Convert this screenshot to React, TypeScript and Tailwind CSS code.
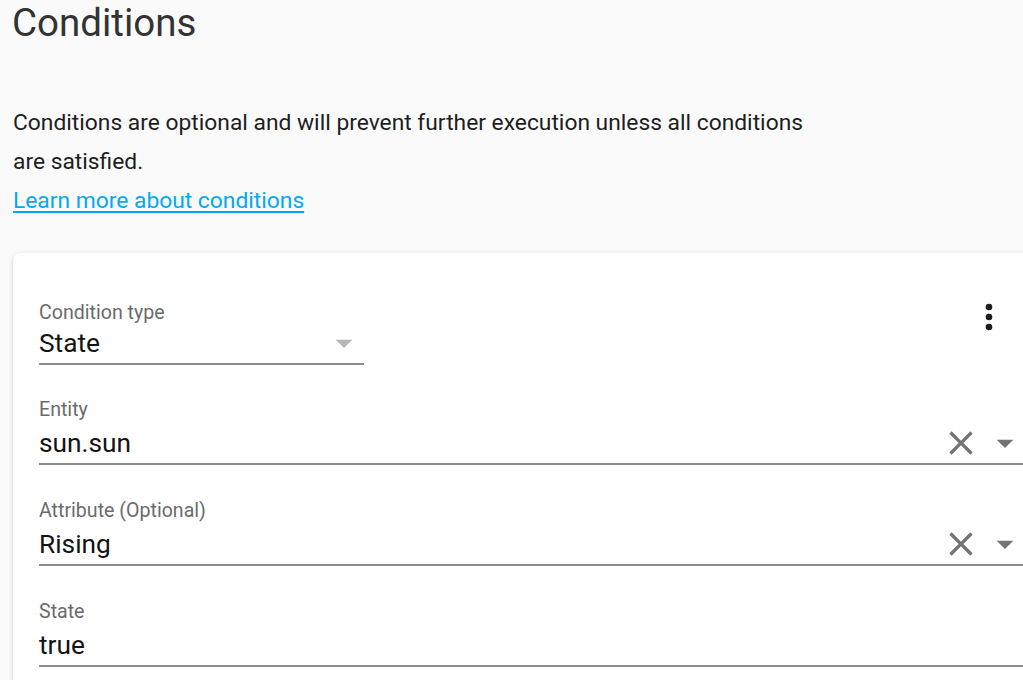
import React from 'react';

const FONT = 'font-[Roboto,"Liberation_Sans",sans-serif]';

function CloseIcon() {
  return (
    <svg viewBox="0 0 24 24" className="w-[40px] h-[40px] shrink-0 fill-[#737373]">
      <path d="M19,6.41L17.59,5L12,10.59L6.41,5L5,6.41L10.59,12L5,17.59L6.41,19L12,13.41L17.59,19L19,17.59L13.41,12L19,6.41Z" />
    </svg>
  );
}

function MenuDown({ light }: { light?: boolean }) {
  return (
    <svg
      viewBox="0 0 24 24"
      className={`w-[40px] h-[40px] shrink-0 ${light ? 'fill-[#b8b8b8]' : 'fill-[#737373]'}`}
    >
      <path d="M7,10L12,15L17,10H7Z" />
    </svg>
  );
}

function DotsVertical() {
  return (
    <svg viewBox="0 0 24 24" className="w-[40px] h-[40px] fill-[#1c1c1c]">
      <path d="M12,16A2,2 0 0,1 14,18A2,2 0 0,1 12,20A2,2 0 0,1 10,18A2,2 0 0,1 12,16M12,10A2,2 0 0,1 14,12A2,2 0 0,1 12,14A2,2 0 0,1 10,12A2,2 0 0,1 12,10M12,4A2,2 0 0,1 14,6A2,2 0 0,1 12,8A2,2 0 0,1 10,6A2,2 0 0,1 12,4Z" />
    </svg>
  );
}

type FieldProps = {
  label: string;
  value: string;
  clearable?: boolean;
  dropdown?: boolean;
  className?: string;
};

function Field({ label, value, clearable, dropdown, className = '' }: FieldProps) {
  return (
    <div className={className}>
      <div className="pt-[1px] text-[19.6px] leading-[24px] text-[#6b6b6b]">{label}</div>
      <div className="mt-[5px] h-[32px] flex items-center">
        <span className="flex-1 text-[26.3px] leading-[32px] text-[#141414]">{value}</span>
        {clearable && <CloseIcon />}
        {dropdown && (
          <div className="ml-[4px] mr-[2px]">
            <MenuDown />
          </div>
        )}
      </div>
      <div className="mt-[4px] h-[2px] bg-[#8c8c8c]" />
    </div>
  );
}

export default function App() {
  return (
    <div className={`w-[1023px] h-[680px] overflow-hidden bg-[#fafafa] ${FONT}`}>
      <h1 className="pl-[12px] text-[38.5px] leading-[46px] text-[#333333] font-normal">
        Conditions
      </h1>

      <div className="mt-[57px] pl-[13px] max-w-[830px] text-[22.8px] leading-[39px] text-[#1e1e1e]">
        <p>
          Conditions are optional and will prevent further execution unless all conditions are
          satisfied.
        </p>
        <a href="#" className="text-[#03a9f4] underline underline-offset-[3px]">
          Learn more about conditions
        </a>
      </div>

      <div className="mt-[33px] ml-[13px] w-[1040px] rounded-[7px] bg-white shadow-[0_2px_2px_0_rgba(0,0,0,0.14),0_1px_5px_0_rgba(0,0,0,0.12),0_3px_1px_-2px_rgba(0,0,0,0.2)] pt-[47px] pb-[40px] pl-[26px] pr-[26px]">
        <div className="flex items-start">
          <div className="w-[325px]">
            <div className="pt-[1px] text-[19.6px] leading-[24px] text-[#6b6b6b]">Condition type</div>
            <div className="mt-[2px] h-[32px] flex items-center">
              <span className="flex-1 text-[26.3px] leading-[32px] text-[#141414]">State</span>
              <MenuDown light />
            </div>
            <div className="mt-[4px] h-[2px] bg-[#8c8c8c]" />
          </div>
          <div className="ml-auto mr-[18px] -mt-[3px]">
            <DotsVertical />
          </div>
        </div>

        <Field className="mt-[32px]" label="Entity" value="sun.sun" clearable dropdown />
        <Field className="mt-[33px]" label="Attribute (Optional)" value="Rising" clearable dropdown />
        <Field className="mt-[33px]" label="State" value="true" />
      </div>
    </div>
  );
}
